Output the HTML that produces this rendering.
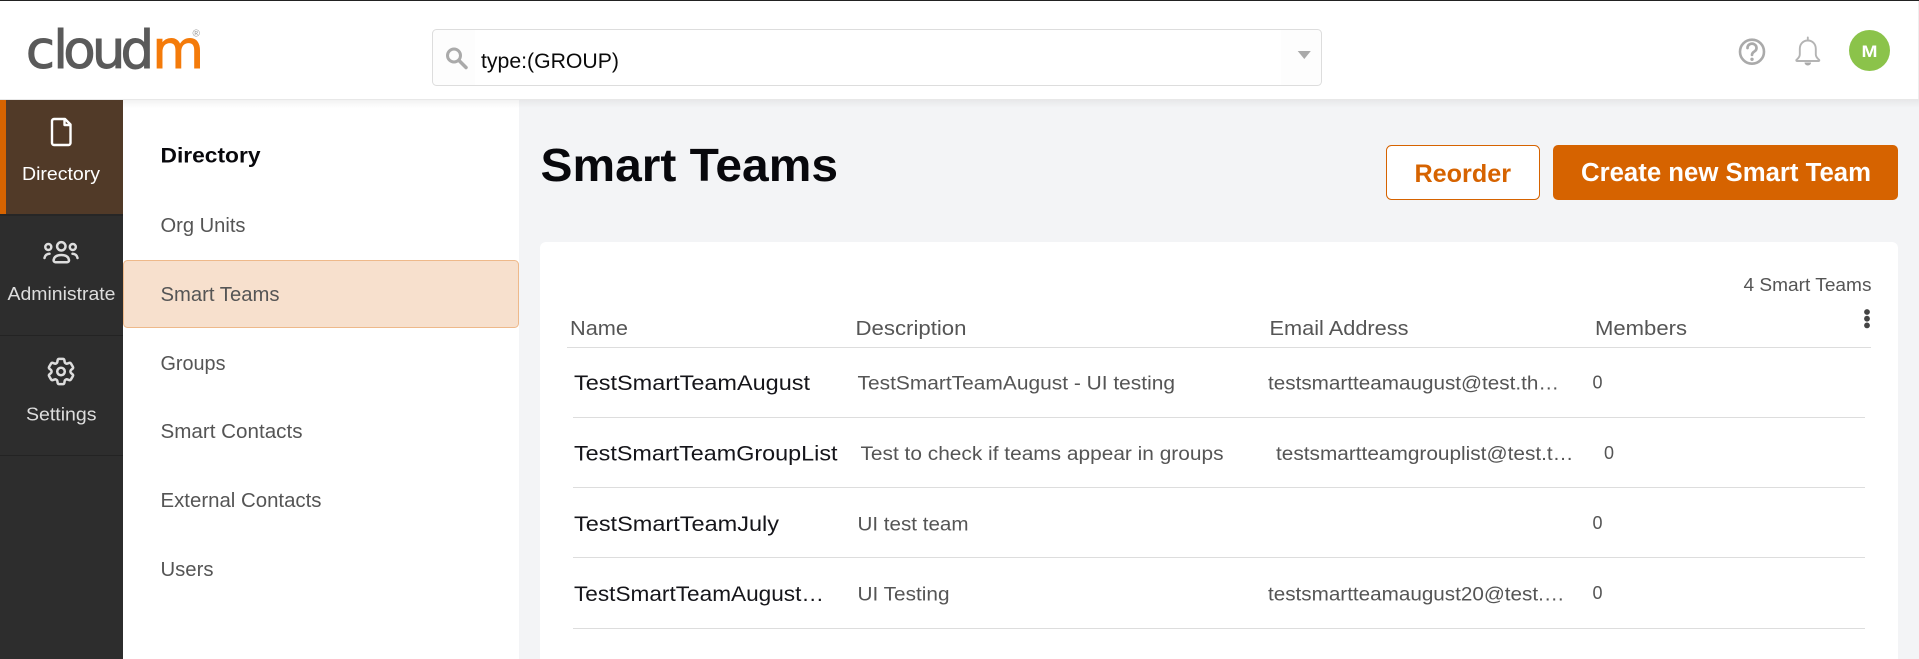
<!DOCTYPE html>
<html lang="en">
<head>
<meta charset="utf-8">
<title>Smart Teams</title>
<style>
html,body{margin:0;padding:0;width:1919px;height:659px;overflow:hidden;background:#f3f4f6}
svg{display:block;position:absolute;left:0;top:0}
text{font-family:"Liberation Sans",Arial,sans-serif;white-space:pre}
.b{font-weight:700}
.nav{font-size:20px;fill:#555}
.side{font-size:18.5px;fill:#ddd}
.th{font-size:20px;fill:#555}
.name{font-size:21.5px;fill:#15151a}
.cell{font-size:19px;fill:#555}
.num{font-size:18px;fill:#555}
.logo{font-family:"DejaVu Sans",sans-serif;font-size:53px;stroke-width:1}
</style>
</head>
<body>
<svg width="1919" height="659" viewBox="0 0 1919 659" xmlns="http://www.w3.org/2000/svg">
<defs>
<linearGradient id="sh" x1="0" y1="0" x2="0" y2="1"><stop offset="0" stop-color="#000" stop-opacity=".05"/><stop offset="1" stop-color="#000" stop-opacity="0"/></linearGradient>
</defs>

<!-- backgrounds -->
<rect width="1919" height="659" fill="#f3f4f6"/>
<rect x="123" y="99" width="396" height="560" fill="#fff"/>
<rect x="0" y="99" width="123" height="560" fill="#2d2d2d"/>

<!-- left rail -->
<rect x="0" y="100" width="123" height="114" fill="#513a28"/>
<rect x="0" y="100" width="6" height="114" fill="#d66300"/>
<rect x="0" y="214" width="123" height="2" fill="#262626"/>
<rect x="0" y="335" width="123" height="1" fill="#232323"/>
<rect x="0" y="455" width="123" height="1" fill="#232323"/>

<path d="M54 119H65L70.500 124.500V143a2 2 0 0 1-2 2H54a2 2 0 0 1-2-2V121a2 2 0 0 1 2-2ZM64.500 119V125H70.500" fill="none" stroke="#fff" stroke-width="2.400" stroke-linejoin="round"/>
<text class="side" x="22" y="180" style="fill:#fff" textLength="78" lengthAdjust="spacingAndGlyphs">Directory</text>

<g fill="none" stroke="#ddd" stroke-width="2.500" stroke-linecap="round">
<circle cx="61.300" cy="246.300" r="4.200"/>
<circle cx="48.300" cy="247" r="3"/>
<circle cx="72.800" cy="247" r="3"/>
<path d="M55.500 262.200h11.600a2 2 0 0 0 1.900-2.200c-.5-3-3-5-7.700-5s-7.200 2-7.700 5a2 2 0 0 0 1.900 2.200Z"/>
<path d="M44.500 258c.5-2.700 2.500-4.300 5-4.300M77.500 258c-.5-2.700-2.500-4.300-5-4.300"/>
</g>
<text class="side" x="7.500" y="300" textLength="108" lengthAdjust="spacingAndGlyphs">Administrate</text>

<g transform="translate(44.200 354.700) scale(1.400)" fill="none" stroke="#ddd" stroke-width="1.800" stroke-linejoin="round">
<circle cx="12" cy="12" r="2.700"/>
<path d="M9.594 3.940c.09-.542.56-.94 1.110-.94h2.593c.55 0 1.020.398 1.110.94l.213 1.281c.063.374.313.686.645.87.074.04.147.083.22.127.325.196.72.257 1.075.124l1.217-.456a1.125 1.125 0 0 1 1.370.49l1.296 2.247a1.125 1.125 0 0 1-.26 1.431l-1.003.827c-.293.241-.438.613-.43.992a7.723 7.723 0 0 1 0 .255c-.008.378.137.75.43.991l1.004.827c.424.35.534.955.26 1.430l-1.298 2.247a1.125 1.125 0 0 1-1.369.491l-1.217-.456c-.355-.133-.75-.072-1.076.124a6.470 6.470 0 0 1-.22.128c-.331.183-.581.495-.644.869l-.213 1.281c-.09.543-.56.94-1.110.94h-2.594c-.55 0-1.019-.398-1.110-.94l-.213-1.281c-.062-.374-.312-.686-.644-.87a6.520 6.520 0 0 1-.22-.127c-.325-.196-.72-.257-1.076-.124l-1.217.456a1.125 1.125 0 0 1-1.369-.49l-1.297-2.247a1.125 1.125 0 0 1 .26-1.431l1.004-.827c.292-.24.437-.613.43-.991a6.932 6.932 0 0 1 0-.255c.007-.38-.138-.751-.43-.992l-1.004-.827a1.125 1.125 0 0 1-.26-1.430l1.297-2.247a1.125 1.125 0 0 1 1.370-.491l1.216.456c.356.133.751.072 1.076-.124.072-.044.146-.086.22-.128.332-.183.582-.495.644-.869l.214-1.280Z"/>
</g>
<text class="side" x="26" y="420.500" textLength="70.500" lengthAdjust="spacingAndGlyphs">Settings</text>

<!-- secondary nav -->
<text class="b" x="160.500" y="162.500" font-size="21" fill="#08080c" textLength="100" lengthAdjust="spacingAndGlyphs">Directory</text>
<text class="nav" x="160.500" y="232" textLength="85" lengthAdjust="spacingAndGlyphs">Org Units</text>
<rect x="123.500" y="260.500" width="395" height="67" rx="4" fill="#f7e0cd" stroke="#eeb98a"/>
<text class="nav" x="160.500" y="301" textLength="119" lengthAdjust="spacingAndGlyphs">Smart Teams</text>
<text class="nav" x="160.500" y="370" textLength="65" lengthAdjust="spacingAndGlyphs">Groups</text>
<text class="nav" x="160.500" y="438" textLength="142" lengthAdjust="spacingAndGlyphs">Smart Contacts</text>
<text class="nav" x="160.500" y="507" textLength="161" lengthAdjust="spacingAndGlyphs">External Contacts</text>
<text class="nav" x="160.500" y="576" textLength="53" lengthAdjust="spacingAndGlyphs">Users</text>

<!-- header -->
<rect x="123" y="100" width="1796" height="8" fill="url(#sh)"/>
<rect width="1919" height="99" fill="#fff"/>
<rect y="99" width="1919" height="1" fill="#e8e8e8"/>
<rect width="1919" height="1" fill="#222"/>
<rect x="1918" y="1" width="1" height="98" fill="#eee"/>

<!-- logo -->
<text class="logo" x="25.900 53.200 63.300 91.900 120.500" y="68" fill="#5a5a5a" stroke="#5a5a5a">cloud</text>
<text class="logo" x="152.400" y="68" fill="#f47b0a" stroke="#f47b0a">m</text>
<text x="192.500" y="36.500" font-size="10" fill="#999">®</text>

<!-- search -->
<rect x="433" y="30" width="42" height="55" fill="#fdfdfd"/>
<rect x="1281" y="30" width="40" height="55" fill="#fdfdfd"/>
<rect x="432.500" y="29.500" width="889" height="56" rx="4" fill="none" stroke="#ddd"/>
<circle cx="454" cy="55.500" r="6.500" fill="none" stroke="#aaa" stroke-width="3"/>
<path d="M459 60.500L466 67.500" stroke="#aaa" stroke-width="3.500" stroke-linecap="round"/>
<text x="481" y="68" font-size="21" fill="#0a0a0a" textLength="138" lengthAdjust="spacingAndGlyphs">type:(GROUP)</text>
<path d="M1297.700 51H1310.800L1304.300 59Z" fill="#aaa"/>

<!-- header right -->
<circle cx="1752" cy="51.700" r="12" fill="none" stroke="#aaa" stroke-width="2.600"/>
<path d="M1747.500 48a4.500 4.200 0 1 1 7 3.400c-1.700 1.100-2.500 1.900-2.500 3.500" fill="none" stroke="#aaa" stroke-width="2.700" stroke-linecap="round"/>
<circle cx="1752" cy="59.300" r="1.700" fill="#aaa"/>
<path d="M1807.800 37.500v3M1807.800 40.500c-5 0-8 3.800-8 8.500v5.500c0 2.500-1.700 4-3.300 5.300a.7.7 0 0 0 .4 1.200h21.800a.7.7 0 0 0 .4-1.200c-1.600-1.300-3.300-2.800-3.300-5.300V49c0-4.700-3-8.500-8-8.500Z" fill="none" stroke="#b4b4b4" stroke-width="1.900" stroke-linejoin="round" stroke-linecap="round"/>
<path d="M1804.500 62.500h6.600a3.300 3 0 0 1-6.600 0Z" fill="#aaa"/>
<circle cx="1869.500" cy="50.500" r="20.500" fill="#8bc34a"/>
<text class="b" x="1861.500" y="57" font-size="17" fill="#fff" textLength="16" lengthAdjust="spacingAndGlyphs">M</text>

<!-- page title + buttons -->
<text class="b" x="540.500" y="181" font-size="46" fill="#08080c" textLength="297.500" lengthAdjust="spacingAndGlyphs">Smart Teams</text>
<rect x="1386.500" y="145.500" width="153" height="54" rx="5" fill="#fff" stroke="#d66300"/>
<text class="b" x="1414.500" y="182" font-size="25" fill="#d66300" textLength="96.500" lengthAdjust="spacingAndGlyphs">Reorder</text>
<rect x="1553" y="145" width="345" height="55" rx="5" fill="#d66300"/>
<text class="b" x="1581" y="181" font-size="25.500" fill="#fff" textLength="290" lengthAdjust="spacingAndGlyphs">Create new Smart Team</text>

<!-- card -->
<path d="M540 659V248a6 6 0 0 1 6-6H1892a6 6 0 0 1 6 6V659Z" fill="#fff"/>
<text x="1743.500" y="291" font-size="18" fill="#555" textLength="128" lengthAdjust="spacingAndGlyphs">4 Smart Teams</text>
<circle cx="1867" cy="312" r="2.900" fill="#444"/><circle cx="1867" cy="318.700" r="2.900" fill="#444"/><circle cx="1867" cy="325.400" r="2.900" fill="#444"/>

<text class="th" x="570" y="335" textLength="58" lengthAdjust="spacingAndGlyphs">Name</text>
<text class="th" x="855.500" y="335" textLength="111" lengthAdjust="spacingAndGlyphs">Description</text>
<text class="th" x="1269.500" y="335" textLength="139" lengthAdjust="spacingAndGlyphs">Email Address</text>
<text class="th" x="1595" y="335" textLength="92" lengthAdjust="spacingAndGlyphs">Members</text>
<rect x="567" y="347" width="1304" height="1" fill="#ddd"/>

<text class="name" x="574" y="390" textLength="236" lengthAdjust="spacingAndGlyphs">TestSmartTeamAugust</text>
<text class="cell" x="857.500" y="389.500" textLength="317.500" lengthAdjust="spacingAndGlyphs">TestSmartTeamAugust - UI testing</text>
<text class="cell" x="1268" y="389.500" textLength="291" lengthAdjust="spacingAndGlyphs">testsmartteamaugust@test.th…</text>
<text class="num" x="1592.500" y="388.500">0</text>
<rect x="573" y="417" width="1292" height="1" fill="#ddd"/>

<text class="name" x="574" y="460.500" textLength="263.500" lengthAdjust="spacingAndGlyphs">TestSmartTeamGroupList</text>
<text class="cell" x="860.500" y="460" textLength="363" lengthAdjust="spacingAndGlyphs">Test to check if teams appear in groups</text>
<text class="cell" x="1276" y="460" textLength="297.500" lengthAdjust="spacingAndGlyphs">testsmartteamgrouplist@test.t…</text>
<text class="num" x="1604" y="459">0</text>
<rect x="573" y="487" width="1292" height="1" fill="#ddd"/>

<text class="name" x="574" y="531" textLength="205" lengthAdjust="spacingAndGlyphs">TestSmartTeamJuly</text>
<text class="cell" x="857.500" y="530.500" textLength="111" lengthAdjust="spacingAndGlyphs">UI test team</text>
<text class="num" x="1592.500" y="529">0</text>
<rect x="573" y="557" width="1292" height="1" fill="#ddd"/>

<text class="name" x="574" y="601" textLength="250" lengthAdjust="spacingAndGlyphs">TestSmartTeamAugust…</text>
<text class="cell" x="857.500" y="600.500" textLength="92" lengthAdjust="spacingAndGlyphs">UI Testing</text>
<text class="cell" x="1268" y="600.500" textLength="296.500" lengthAdjust="spacingAndGlyphs">testsmartteamaugust20@test.…</text>
<text class="num" x="1592.500" y="599">0</text>
<rect x="573" y="628" width="1292" height="1" fill="#ddd"/>
</svg>
</body>
</html>
